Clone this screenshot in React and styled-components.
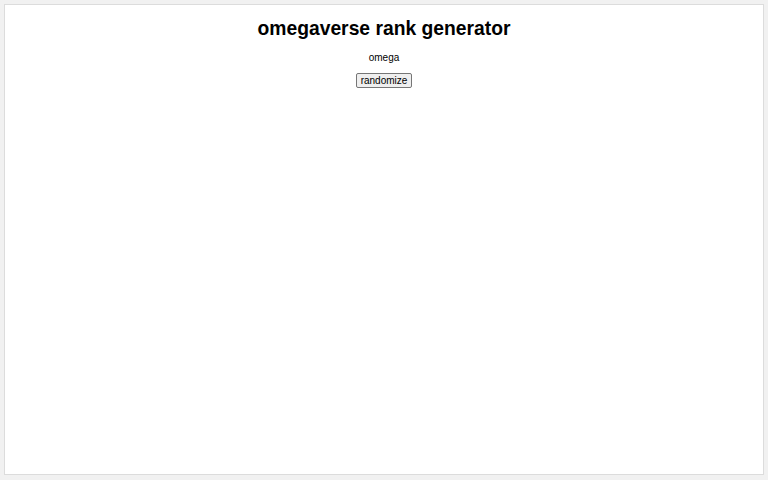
import React, { useState } from "react";
import styled, { createGlobalStyle } from "styled-components";

const Global = createGlobalStyle`
  html, body { margin: 0; padding: 0; }
  body {
    background: #f1f1f1;
    font-family: "Liberation Sans", Arial, sans-serif;
  }
`;

const Page = styled.div`
  box-sizing: border-box;
  height: 480px;
  padding: 4px 4px 5px 4px;
  display: flex;
`;

const Panel = styled.main`
  flex: 1;
  background: #fff;
  border: 1px solid #dcdcdc;
  display: flex;
  flex-direction: column;
  align-items: center;
`;

const Title = styled.h1`
  margin: 13px 0 0;
  font-size: 19.3px;
  font-weight: bold;
  color: #000;
  line-height: 22px;
`;

const Result = styled.p`
  margin: 12px 0 0;
  font-size: 10px;
  line-height: 12px;
  color: #000;
`;

const Button = styled.button`
  margin-top: 9px;
  font-family: "Liberation Sans", Arial, sans-serif;
  font-size: 10px;
  line-height: 11px;
  padding: 1px 4px;
  color: #000;
  background: #efefef;
  border: 1px solid #767676;
  border-radius: 2px;
`;

const ranks = ["alpha", "beta", "omega", "delta", "gamma", "sigma"];

export default function App() {
  const [rank, setRank] = useState("omega");
  return (
    <>
      <Global />
      <Page>
        <Panel>
          <Title>omegaverse rank generator</Title>
          <Result>{rank}</Result>
          <Button onClick={() => setRank(ranks[Math.floor(Math.random() * ranks.length)])}>
            randomize
          </Button>
        </Panel>
      </Page>
    </>
  );
}
